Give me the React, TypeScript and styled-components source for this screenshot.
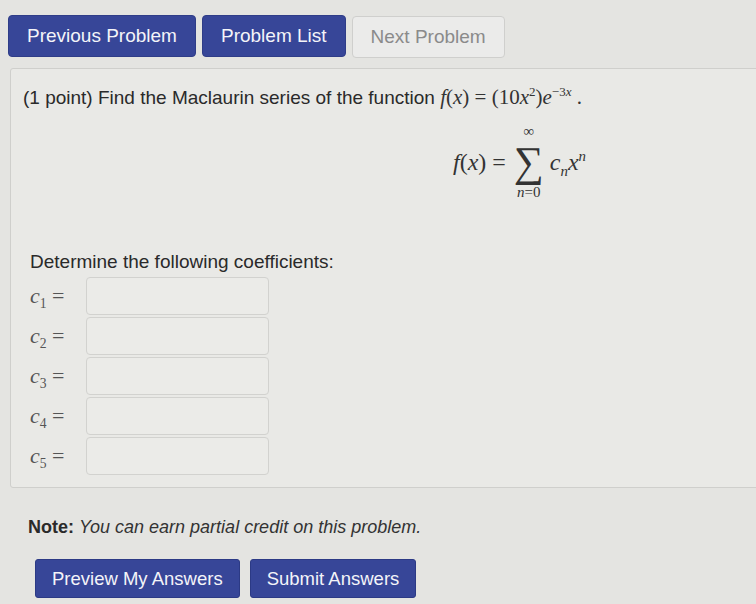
import styled, { createGlobalStyle } from "styled-components";

const Global = createGlobalStyle`
body {
  margin: 0;
  background: #e4e4e1;
  font-family: "Liberation Sans", Arial, sans-serif;
  color: #2a2a2a;
}
`

const Page = styled.div`
padding: 15px 0 0 8px;
overflow: hidden;
height: 604px;
box-sizing: border-box;
`

const NavRow = styled.div`
display: flex;
gap: 6px;
align-items: flex-start;
`

interface BtnProps {
  disabled?: boolean;
}

const NavButton = styled.div<BtnProps>`
height: 42px;
padding: 0 18px;
display: flex;
align-items: center;
font-size: 19px;
border-radius: 4px;
box-sizing: border-box;
color: ${p => p.disabled ? '#8a8a8a' : '#f4f4f8'};
background: ${p => p.disabled ? '#ebebea' : '#374698'};
border: 1px solid ${p => p.disabled ? '#cfcfcd' : '#2f3d88'};
margin-top: ${p => p.disabled ? '1px' : '0'};
`

const ProblemBox = styled.div`
margin: 10px -20px 0 2px;
height: 420px;
box-sizing: border-box;
background: #e9e9e6;
border: 1px solid #cfcfcc;
border-radius: 3px;
padding: 16px 0 0 12px;
`

const Statement = styled.div`
font-size: 19px;
`

const M = styled.span`
font-family: "Liberation Serif", "Times New Roman", serif;
font-style: italic;
`

const Formula = styled.span`
font-family: "Liberation Serif", "Times New Roman", serif;
font-size: 21px;
color: #333;
`

const Sup = styled.sup`
font-size: 0.62em;
line-height: 0;
`

const Sub = styled.sub`
font-size: 0.62em;
line-height: 0;
`

const Display = styled.div`
display: flex;
align-items: center;
padding-left: 430px;
margin-top: 14px;
font-family: "Liberation Serif", "Times New Roman", serif;
font-size: 24px;
color: #333;
`

const SumStack = styled.div`
display: inline-flex;
flex-direction: column;
align-items: center;
gap: 4px;
margin: 0 6px 0 8px;
line-height: 1;
`

const Limit = styled.span`
font-size: 15px;
`

const Sigma = styled.span`
font-size: 42px;
line-height: 38px;
`

const Determine = styled.div`
margin: 51px 0 0 7px;
font-size: 19px;
`

const Rows = styled.div`
display: flex;
flex-direction: column;
gap: 2px;
margin: 4px 0 0 7px;
`

const Row = styled.div`
display: flex;
align-items: center;
`

const Label = styled.div`
width: 56px;
font-family: "Liberation Serif", "Times New Roman", serif;
font-size: 22px;
color: #555;
`

const Answer = styled.input`
width: 183px;
height: 38px;
box-sizing: border-box;
border: 1px solid #d2d2cf;
border-radius: 4px;
background: #ebebe8;
`

const Note = styled.div`
margin: 29px 0 0 20px;
font-size: 18px;
b { font-weight: bold; }
i { font-style: italic; color: #333; }
`

const SubmitRow = styled.div`
display: flex;
gap: 10px;
margin: 21px 0 0 27px;
`

const ActionButton = styled.div`
height: 39px;
padding: 0 16px;
display: flex;
align-items: center;
font-size: 18.5px;
color: #f4f4f8;
background: #374698;
border: 1px solid #2c3a85;
border-radius: 3px;
box-sizing: border-box;
`

const coefs = [1, 2, 3, 4, 5];

export default function App() {
  return (
    <Page>
      <Global />
      <NavRow>
        <NavButton>Previous Problem</NavButton>
        <NavButton>Problem List</NavButton>
        <NavButton disabled>Next Problem</NavButton>
      </NavRow>
      <ProblemBox>
        <Statement>
          (1 point) Find the Maclaurin series of the function{' '}
          <Formula>
            <M>f</M>(<M>x</M>) = (10<M>x</M><Sup>2</Sup>)<M>e</M>
            <Sup>−3<M>x</M></Sup>&nbsp;.
          </Formula>
        </Statement>
        <Display>
          <span><M>f</M>(<M>x</M>) =</span>
          <SumStack>
            <Limit>∞</Limit>
            <Sigma>∑</Sigma>
            <Limit><M>n</M>=0</Limit>
          </SumStack>
          <span><M>c</M><Sub><M>n</M></Sub><M>x</M><Sup><M>n</M></Sup></span>
        </Display>
        <Determine>Determine the following coefficients:</Determine>
        <Rows>
          {coefs.map(n => (
            <Row key={n}>
              <Label><M>c</M><Sub>{n}</Sub> =</Label>
              <Answer />
            </Row>
          ))}
        </Rows>
      </ProblemBox>
      <Note><b>Note:</b> <i>You can earn partial credit on this problem.</i></Note>
      <SubmitRow>
        <ActionButton>Preview My Answers</ActionButton>
        <ActionButton>Submit Answers</ActionButton>
      </SubmitRow>
    </Page>
  );
}
